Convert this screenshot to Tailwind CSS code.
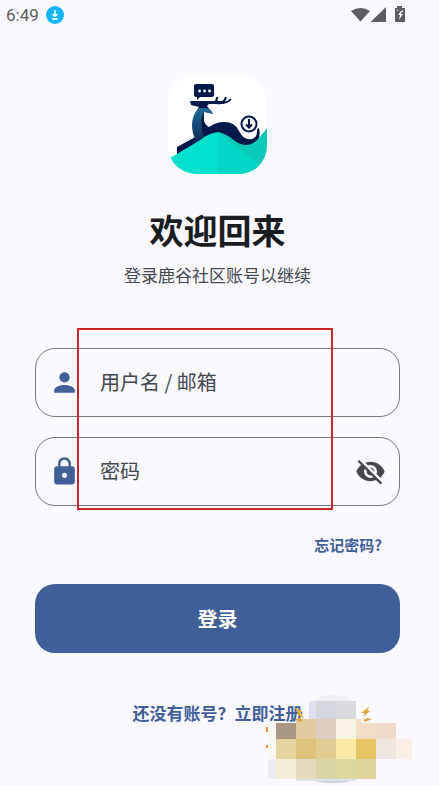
<!DOCTYPE html>
<html lang="zh-CN">
<head>
<meta charset="utf-8">
<meta name="viewport" content="width=device-width, initial-scale=1">
<title>登录</title>
<script src="https://cdn.jsdelivr.net/npm/@tailwindcss/browser@4"></script>
</head>
<body class="relative min-h-screen overflow-x-hidden bg-[#f9f9ff] font-['Noto_Sans_CJK_SC',sans-serif] text-[#44474e]">
<header class="flex h-[30px] items-center justify-between pr-[33px] pl-[6px] text-[#5d5d61]">
  <div class="flex items-center gap-[7px]">
    <time class="font-[Roboto,sans-serif] text-[17px] leading-5">6:49</time>
    <svg class="size-[18px]" viewBox="0 0 18 18" fill="none"><circle cx="9" cy="9" r="9" fill="#10b5fa"/><path d="M9 4v6M6.500 8 9 10.500 11.500 8M6 13h6" stroke="#fff" stroke-width="1.500"/></svg>
  </div>
  <svg class="h-[18px] w-[55px]" viewBox="0 0 55 18" fill="currentColor"><path d="M0 5Q9.500-1 19 5L9.500 15.500Z"/><path d="M20 16V15.500L35 1V16Z"/><path d="M46 0h5v2h3V16H44V2h2Z"/><path d="m50 5-3 4h2l-1 5 4-6h-2l1-3Z" fill="#f9f9ff"/><path d="M45.500 4h2M51.500 4v2" stroke="#ddd"/></svg>
</header>
<main class="flex flex-col pt-[45px] pr-[39px] pl-[35px]">
  <svg class="size-[100px] self-center" viewBox="0 0 100 100" role="img" aria-label="鹿谷">
    <defs><clipPath id="tile"><rect width="99" height="99" rx="28"/></clipPath><linearGradient id="body" x2="0" y2="1"><stop stop-color="#1d6a99"/><stop offset="1" stop-color="#0b3059"/></linearGradient></defs>
    <g clip-path="url(#tile)">
      <rect width="100" height="100" fill="#fff"/>
      <path d="M22 26H56V29H41L39 31L45 39H37L36 47Q38 51 41 52Q48 47 56 47Q67 47 71 56Q76 66 84 64Q90 62 89 54L91 53Q93 61 89 68L81 73L60 67L50 60L9 83V72L31 60Q21 46 31 32L23 30Z" fill="#02184a"/>
      <path d="M31 33Q24 40 24 50Q24 59 28 65L36 62Q32 53 36 42L37 37L45 39Q43 33 38 33Z" fill="url(#body)"/>
      <path d="M36 37Q31 46 35 56L43 51Q36 48 36 37Z" fill="#02184a"/>
      <path d="M36 37V46Q38 51 41 52Q46 48 50 47L48 41L45 39Z" fill="#fff"/>
      <path d="M31 28H48Q59 29 63 24M47 27Q49 26 49 22M54 27Q57 26 58 22" fill="none" stroke="#02184a" stroke-width="2"/>
      <path d="M28 9H44Q46 9 46 11V20Q46 22 44 22H32L29 25V22Q26 22 26 20V11Q26 9 28 9Z" fill="#02184a"/>
      <path d="M31.500 16h.1M36.500 16h.1M41.500 16h.1" stroke="#fff" stroke-width="2.800" stroke-linecap="round"/>
      <path d="M0 84Q18 74 32 65Q41 58 50 57V100H0Z" fill="#03e0ce"/>
      <path d="M50 57Q59 59 67 66Q80 75 90 64L100 52V100H50Z" fill="#0bcbb8"/>
      <path d="M50 57L91 90V100H50Z" fill="#03d7c7"/>
      <circle cx="81" cy="49" r="7.500" fill="#fff" stroke="#02184a" stroke-width="2"/><path d="M81 44v8M78 49.500l3 3 3-3" fill="none" stroke="#02184a" stroke-width="2"/>
    </g>
  </svg>
  <h1 class="mt-[31px] text-center text-[34px] leading-[48px] font-bold text-[#191c20]">欢迎回来</h1>
  <p class="mt-[9px] text-center text-[17px] leading-6">登录鹿谷社区账号以继续</p>
  <form class="mt-[61px] flex flex-col">
    <div class="flex h-[69px] items-center rounded-[20px] border border-[#74777f] px-[13px]">
      <label for="username" class="shrink-0"><svg role="img" aria-label="用户名 / 邮箱" class="size-[31px]" viewBox="0 0 24 24" fill="#405f98"><path d="M12 12c2.210 0 4-1.790 4-4s-1.790-4-4-4-4 1.790-4 4 1.790 4 4 4zm0 2c-2.670 0-8 1.340-8 4v2h16v-2c0-2.660-5.330-4-8-4z"/></svg></label>
      <input id="username" type="text" autocomplete="username" placeholder="用户名 / 邮箱" class="mb-[2px] ml-5 min-w-0 flex-1 bg-transparent text-[20px] leading-8 outline-none placeholder:text-[#44474e] placeholder:opacity-100">
    </div>
    <div class="mt-5 flex h-[69px] items-center rounded-[20px] border border-[#74777f] px-[13px]">
      <label for="password" class="shrink-0"><svg role="img" aria-label="密码" class="size-[31px]" viewBox="0 0 24 24" fill="#405f98"><path d="M18 8h-1V6c0-2.760-2.240-5-5-5S7 3.240 7 6v2H6c-1.100 0-2 .9-2 2v10c0 1.100.9 2 2 2h12c1.100 0 2-.9 2-2V10c0-1.100-.9-2-2-2zm-6 9c-1.100 0-2-.9-2-2s.9-2 2-2 2 .9 2 2-.9 2-2 2zm3.100-9H8.900V6c0-1.710 1.390-3.100 3.100-3.100s3.100 1.390 3.100 3.100v2z"/></svg></label>
      <input id="password" type="password" autocomplete="current-password" placeholder="密码" class="mb-[2px] ml-5 min-w-0 flex-1 bg-transparent text-[20px] leading-8 outline-none placeholder:text-[#44474e] placeholder:opacity-100">
      <button type="button" aria-label="显示密码" class="shrink-0"><svg class="size-[31px]" viewBox="0 0 24 24" fill="#44474e"><path d="M12 7c2.760 0 5 2.240 5 5 0 .65-.13 1.260-.36 1.830l2.920 2.920c1.510-1.260 2.700-2.890 3.430-4.750-1.730-4.390-6-7.500-11-7.500-1.400 0-2.740.25-3.980.7l2.160 2.160C10.740 7.130 11.350 7 12 7zM2 4.270l2.280 2.280.46.46C3.080 8.300 1.780 10.020 1 12c1.730 4.390 6 7.500 11 7.500 1.550 0 3.030-.3 4.380-.84l.42.42L19.730 22 21 20.730 3.270 3 2 4.270zM7.530 9.800l1.550 1.550c-.05.21-.08.43-.08.65 0 1.660 1.340 3 3 3 .22 0 .44-.03.65-.08l1.550 1.550c-.67.33-1.410.53-2.200.53-2.760 0-5-2.240-5-5 0-.79.2-1.530.53-2.200zm4.310-.78 3.150 3.150.02-.16c0-1.660-1.340-3-3-3l-.17.010z"/></svg></button>
    </div>
    <a href="#" class="mt-[27px] mr-[18px] self-end text-[15px] leading-6 font-bold text-[#405f98]">忘记密码?</a>
    <button type="submit" class="mt-[27px] h-[69px] rounded-[20px] bg-[#3f5f98] text-[20px] font-bold text-white">登录</button>
  </form>
  <a href="#" class="mt-[48px] self-center text-[17px] leading-6 font-bold text-[#405f98]">还没有账号？立即注册</a>
</main>
<div class="pointer-events-none absolute top-[328px] left-[77px] h-[182px] w-[256px] border-2 border-[#c9252c]"></div>
<svg class="pointer-events-none absolute top-[695px] left-[264px] h-[91px] w-[150px]" viewBox="264 695 150 91" shape-rendering="crispEdges" aria-hidden="true">
  <ellipse cx="333" cy="707" rx="22" ry="12" fill="#f0f0f2" shape-rendering="auto"/><ellipse cx="333" cy="777" rx="24" ry="6" fill="#c8cedb" shape-rendering="auto"/>
  <path d="M309 701h7v18h-7z" fill="#dde1ef"/><path d="M316 701h20v18h-20z" fill="#d4d7de"/><path d="M336 701h20v18h-20z" fill="#dadbdf"/>
  <path d="M268 723h8v16h-8z" fill="#f7f7f6"/><path d="M276 723h20v16h-20z" fill="#a99782"/><path d="M296 719h20v20h-20z" fill="#e5c99f"/><path d="M316 719h20v20h-20z" fill="#dfcdc0"/><path d="M336 719h20v20h-20z" fill="#f9f3e3"/><path d="M356 719h5v4h15v16h-20z" fill="#f2dcc6"/><path d="M376 723h20v16h-20z" fill="#f1dac5"/><path d="M396 723h16v16h-16z" fill="#faf8fc"/>
  <path d="M268 739h8v20h-8z" fill="#faf7f3"/><path d="M276 739h20v20h-20z" fill="#e8d3a2"/><path d="M296 739h20v20h-20z" fill="#dec27b"/><path d="M316 739h20v20h-20z" fill="#e1cb92"/><path d="M336 739h20v20h-20z" fill="#fce9a8"/><path d="M356 739h20v20h-20z" fill="#e8c564"/><path d="M376 739h20v20h-20z" fill="#f0e6e0"/><path d="M396 739h16v20h-16z" fill="#fbefe5"/>
  <path d="M268 759h8v20h-8z" fill="#ebedf3"/><path d="M276 759h20v20h-20z" fill="#f4efd9"/><path d="M296 759h20v20h-20z" fill="#e3dbbb"/><path d="M316 759h20v20h-20z" fill="#dad5a9"/><path d="M336 759h20v20h-20z" fill="#dcd6a0"/><path d="M356 759h20v20h-20z" fill="#dfd59a"/>
  <path d="M296 779h60v2h-60z" fill="#dfe3ee"/>
  <g shape-rendering="auto"><path d="m294 707 8 4-1 2 3 6-7-5 1-2ZM295 719l4-1 4 2-3 2ZM370 706l-9 7h4l-2 4 7-6-3-1ZM363 720l5-2 4 1-7 3Z" fill="#dfa535"/><path d="M266 727h2v5h-2zM266 745h2v3h-2z" fill="#e4903a"/></g>
</svg>
</body>
</html>
